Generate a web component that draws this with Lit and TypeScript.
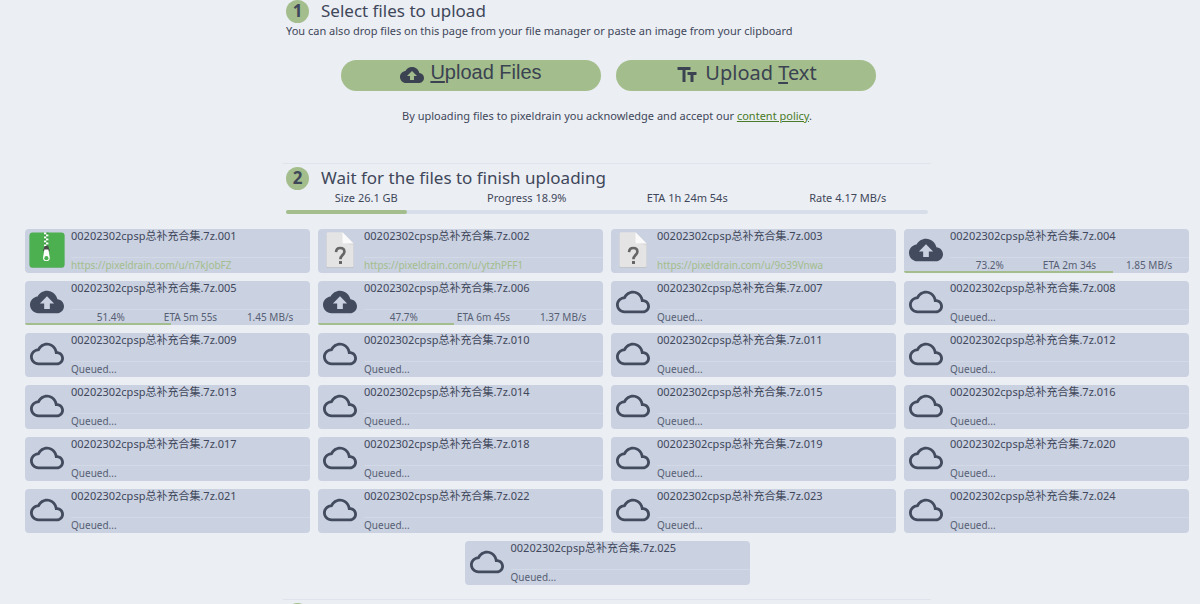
import { LitElement, html, css, svg, nothing } from "lit";
import { customElement, property } from "lit/decorators.js";

type Kind = "archive" | "unknown" | "uploading" | "queued";

interface FileItem {
  name: string;
  kind: Kind;
  url?: string;
  percent?: number;
  eta?: string;
  rate?: string;
}

const CLOUD_UP =
  "M19.35 10.04C18.67 6.59 15.64 4 12 4 9.11 4 6.6 5.64 5.35 8.04 2.34 8.36 0 10.91 0 14c0 3.31 2.69 6 6 6h13c2.76 0 5-2.24 5-5 0-2.64-2.05-4.78-4.65-4.96zM14 13v4h-4v-4H7l5-5 5 5h-3z";
const CLOUD =
  "M19.35 10.04C18.67 6.59 15.64 4 12 4 9.11 4 6.6 5.64 5.35 8.04 2.34 8.36 0 10.91 0 14c0 3.31 2.69 6 6 6h13c2.76 0 5-2.24 5-5 0-2.64-2.05-4.78-4.65-4.96zM19 18H6c-2.21 0-4-1.79-4-4 0-2.05 1.53-3.76 3.56-3.97l1.07-.11.5-.95C8.08 7.14 9.94 6 12 6c2.62 0 4.88 1.86 5.39 4.43l.3 1.5 1.53.11c1.56.1 2.78 1.41 2.78 2.96 0 1.65-1.35 3-3 3z";
const TEXT_FIELDS = "M2.5 4v3h5v12h3V7h5V4h-13zm19 5h-9v3h3v7h3v-7h3V9z";

const glyph = (d: string, cls: string) =>
  html`<svg class=${cls} viewBox="0 0 24 24" aria-hidden="true"><path d=${d} /></svg>`;

const archiveIcon = html`<svg class="mime" viewBox="0 0 36 36" aria-hidden="true">
  <rect x="0.5" y="1" width="35" height="35" rx="3" fill="#3d8b40" opacity="0.4" />
  <rect x="0.5" y="0.5" width="35" height="35" rx="3" fill="#4caf50" />
  ${[0, 1, 2, 3, 4, 5, 6].map(
    (i) => svg`<rect x=${i % 2 ? 17 : 15} y=${0.5 + i * 2} width="2.4" height="2" fill="#fff" />
      <rect x=${i % 2 ? 15 : 17.4} y=${0.5 + i * 2} width="2" height="2" fill="#2f7d33" opacity="0.5" />`
  )}
  <path d="M15.600 14h3.600l1.600 5h-6.800z" fill="#4a4a4a" />
  <path d="M15.400 17.500h4l1.400 8.200a3.400 3.400 0 1 1-6.800 0z" fill="#fff" />
  <circle cx="17.400" cy="26.200" r="2.100" fill="#4caf50" />
</svg>`;

const unknownIcon = html`<svg class="mime" viewBox="0 0 36 36" aria-hidden="true">
  <path d="M6 1h14.500l11 11.500v22.200a1.500 1.500 0 0 1-1.500 1.500H6a1.500 1.500 0 0 1-1.500-1.500V2.500A1.500 1.500 0 0 1 6 1z" fill="#b9bdc6" />
  <path d="M6 .3h14.500l11 11.200v22.300a1.500 1.500 0 0 1-1.500 1.500H6a1.500 1.500 0 0 1-1.500-1.500v-32A1.500 1.500 0 0 1 6 .3z" fill="#e4e4e4" />
  <path d="M21 11.500h10.500v1z" fill="#c4c4c4" />
  <path d="M20.500.3l11 11.200H22a1.500 1.500 0 0 1-1.500-1.500z" fill="#fafafa" />
  <path d="M14 20.200c.2-2.800 1.700-4.200 4.200-4.200 2.600 0 4.200 1.500 4.200 3.700 0 3.200-4 3.600-4 7.600" fill="none" stroke="#666" stroke-width="2.600" />
  <rect x="17" y="29" width="3" height="3" fill="#666" />
</svg>`;

const prefix = "00202302cpsp总补充合集.7z.";
const started: Record<number, Omit<FileItem, "name">> = {
  1: { kind: "archive", url: "https://pixeldrain.com/u/n7kJobFZ" },
  2: { kind: "unknown", url: "https://pixeldrain.com/u/ytzhPFF1" },
  3: { kind: "unknown", url: "https://pixeldrain.com/u/9o39Vnwa" },
  4: { kind: "uploading", percent: 73.2, eta: "2m 34s", rate: "1.85 MB/s" },
  5: { kind: "uploading", percent: 51.4, eta: "5m 55s", rate: "1.45 MB/s" },
  6: { kind: "uploading", percent: 47.7, eta: "6m 45s", rate: "1.37 MB/s" },
};
const files: FileItem[] = Array.from({ length: 25 }, (_, i) => ({
  name: prefix + String(i + 1).padStart(3, "0"),
  ...(started[i + 1] ?? { kind: "queued" as Kind }),
}));

@customElement("upload-card")
class UploadCard extends LitElement {
  @property({ attribute: false }) file!: FileItem;

  static styles = css`
    :host {
      display: grid;
      grid-template-columns: 46px 1fr;
      position: relative;
      height: 44px;
      border-radius: 4px;
      background: #cad1e1;
      color: #3f475a;
    }
    .icon {
      display: flex;
      align-items: center;
      padding: 0 0 2px 4px;
    }
    .cloud {
      width: 34px;
      height: 34px;
      margin-left: 1px;
      fill: #434c5e;
    }
    .mime {
      width: 36px;
      height: 36px;
    }
    .body {
      display: grid;
      grid-template-rows: 28px 16px;
      min-width: 0;
    }
    .name {
      font-size: 11px;
      line-height: 14px;
      white-space: nowrap;
    }
    .status {
      border-top: 1px solid #d3d9e7;
      font-size: 10px;
      line-height: 14px;
      color: #565f73;
      white-space: nowrap;
    }
    .stats {
      display: grid;
      grid-template-columns: repeat(3, 1fr);
      text-align: center;
    }
    a {
      color: #a3be8c;
      text-decoration: none;
    }
    .bar {
      position: absolute;
      left: 0;
      bottom: 0;
      height: 2px;
      border-bottom-left-radius: 2px;
      background: #a3be8c;
    }
  `;

  private icon() {
    switch (this.file.kind) {
      case "archive":
        return archiveIcon;
      case "unknown":
        return unknownIcon;
      case "uploading":
        return glyph(CLOUD_UP, "cloud");
      default:
        return glyph(CLOUD, "cloud");
    }
  }

  private status() {
    const f = this.file;
    if (f.url) return html`<div class="status"><a href=${f.url}>${f.url}</a></div>`;
    if (f.percent === undefined) return html`<div class="status">Queued...</div>`;
    return html`<div class="status stats">
      <span>${f.percent}%</span><span>ETA ${f.eta}</span><span>${f.rate}</span>
    </div>`;
  }

  render() {
    const f = this.file;
    return html`
      <div class="icon">${this.icon()}</div>
      <div class="body">
        <div class="name">${f.name}</div>
        ${this.status()}
      </div>
      ${f.percent === undefined ? nothing : html`<div class="bar" style="width:${f.percent}%"></div>`}
    `;
  }
}

@customElement("app-root")
class AppRoot extends LitElement {
  static styles = css`
    :host {
      display: block;
      box-sizing: border-box;
      height: 100vh;
      overflow: hidden;
      padding: 0 11px 0 25px;
      background: #ebeef3;
      color: #3f475a;
      font-family: "Noto Sans", "Noto Sans CJK SC", sans-serif;
      font-size: 11px;
      line-height: 16px;
    }
    section {
      box-sizing: border-box;
      max-width: 648px;
      margin: 0 auto;
      padding: 0 3px;
    }
    .ruled {
      border-top: 1px solid #dfe3ec;
      padding-top: 3px;
    }
    h2 {
      display: flex;
      gap: 12px;
      height: 23px;
      margin: 0;
      font-size: 17px;
      font-weight: 400;
      line-height: 22px;
    }
    .num {
      width: 23px;
      height: 23px;
      border-radius: 50%;
      background: #a3be8c;
      font-weight: 700;
      text-align: center;
    }
    p {
      margin: 0;
    }
    .actions {
      display: flex;
      justify-content: center;
      gap: 15px;
      padding: 21px 0 17px 3px;
    }
    button {
      display: flex;
      align-items: center;
      justify-content: center;
      gap: 6px;
      width: 260px;
      height: 31px;
      padding: 0 0 6px;
      border: 0;
      border-radius: 16px;
      background: #a3be8c;
      color: #3b4252;
      font-family: inherit;
      font-size: 20px;
      line-height: 25px;
    }
    .arial {
      font-family: "Liberation Sans", Arial, sans-serif;
    }
    button svg {
      width: 24px;
      height: 24px;
      margin-top: 4px;
      fill: #3b4252;
    }
    u {
      text-underline-offset: 2px;
    }
    .policy {
      padding-bottom: 39px;
      text-align: center;
    }
    .policy a {
      color: #4a7b28;
    }
    .totals {
      display: grid;
      grid-template-columns: repeat(4, 1fr);
      padding-bottom: 4px;
      text-align: center;
    }
    .track {
      height: 4px;
      border-radius: 2px;
      background: #d8dee9;
    }
    .fill {
      height: 100%;
      border-radius: 2px;
      background: #a3be8c;
    }
    .files {
      display: flex;
      flex-wrap: wrap;
      justify-content: center;
      gap: 8px;
      padding: 15px 0 14px;
    }
    upload-card {
      width: calc((100% - 24px) / 4);
    }
  `;

  render() {
    return html`
      <section>
        <h2><span class="num">1</span>Select files to upload</h2>
        <p>You can also drop files on this page from your file manager or paste an image from your clipboard</p>
        <div class="actions">
          <button class="arial">${glyph(CLOUD_UP, "")}<span><u>U</u>pload Files</span></button>
          <button>${glyph(TEXT_FIELDS, "")}<span>Upload <u>T</u>ext</span></button>
        </div>
        <p class="policy">
          By uploading files to pixeldrain you acknowledge and accept our <a href="#policy">content policy</a>.
        </p>
      </section>
      <section class="ruled">
        <h2><span class="num">2</span>Wait for the files to finish uploading</h2>
        <div class="totals">
          <span>Size 26.1 GB</span><span>Progress 18.9%</span><span>ETA 1h 24m 54s</span><span>Rate 4.17 MB/s</span>
        </div>
        <div class="track"><div class="fill" style="width:18.9%"></div></div>
      </section>
      <div class="files">${files.map((f) => html`<upload-card .file=${f}></upload-card>`)}</div>
      <section class="ruled">
        <h2><span class="num"></span></h2>
      </section>
    `;
  }
}
